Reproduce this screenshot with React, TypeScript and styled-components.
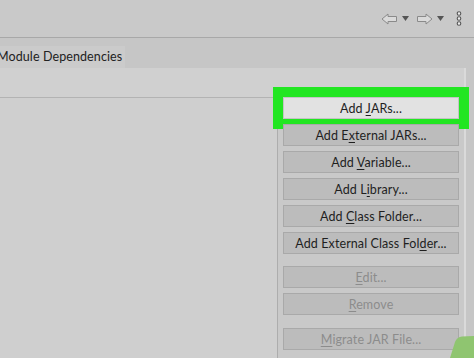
import React, { FC } from 'react'
import styled, { createGlobalStyle } from 'styled-components'

interface ButtonItem {
    before: string
    key: string
    after: string
    disabled?: boolean
    highlight?: boolean
    gapBefore?: number
}

const buttons: ButtonItem[] = [
    { before: 'Add ', key: 'J', after: 'ARs...', highlight: true },
    { before: 'Add E', key: 'x', after: 'ternal JARs...' },
    { before: 'Add ', key: 'V', after: 'ariable...' },
    { before: 'Add L', key: 'i', after: 'brary...' },
    { before: 'Add ', key: 'C', after: 'lass Folder...' },
    { before: 'Add External Class Fol', key: 'd', after: 'er...' },
    { before: '', key: 'E', after: 'dit...', disabled: true, gapBefore: 7 },
    { before: '', key: 'R', after: 'emove', disabled: true },
    { before: '', key: 'M', after: 'igrate JAR File...', disabled: true, gapBefore: 8 },
]

const GlobalStyle = createGlobalStyle`
    html, body {
        margin: 0;
        padding: 0;
        background: #c6c6c6;
    }
    body {
        font-family: Lato, "Open Sans", sans-serif;
    }
`

const BackArrow: FC = () => (
    <svg width="17" height="12" viewBox="0 0 17 12">
        <path d="M1 6 L7 1 L7 3.5 L15.5 3.5 L15.5 8.5 L7 8.5 L7 11 Z" fill="#dadada" stroke="#8a8a8a" strokeWidth="1" strokeLinejoin="round" />
    </svg>
)

const ForwardArrow: FC = () => (
    <svg width="17" height="12" viewBox="0 0 17 12">
        <path d="M16 6 L10 1 L10 3.5 L1.5 3.5 L1.5 8.5 L10 8.5 L10 11 Z" fill="#dadada" stroke="#8a8a8a" strokeWidth="1" strokeLinejoin="round" />
    </svg>
)

const DropTriangle: FC = () => (
    <svg width="7" height="5" viewBox="0 0 7 5">
        <path d="M0 0 L7 0 L3.5 5 Z" fill="#555" />
    </svg>
)

const MenuDots: FC = () => (
    <svg width="6" height="15" viewBox="0 0 6 15">
        <circle cx="3" cy="2.5" r="1.8" fill="#eee" stroke="#555" strokeWidth="1.1" />
        <circle cx="3" cy="7.5" r="1.8" fill="#eee" stroke="#555" strokeWidth="1.1" />
        <circle cx="3" cy="12.5" r="1.8" fill="#eee" stroke="#555" strokeWidth="1.1" />
    </svg>
)

const App: FC = () => {
  return (
    <>
    <GlobalStyle />
    <Page>
        <TopBar>
            <NavGroup>
                <BackArrow />
                <DropTriangle />
            </NavGroup>
            <NavGroup>
                <ForwardArrow />
                <DropTriangle />
            </NavGroup>
            <DotsWrap><MenuDots /></DotsWrap>
        </TopBar>
        <TabRow>
            <Tab>Module Dependencies</Tab>
        </TabRow>
        <Panel>
            <HeaderStrip />
            <PanelBody>
                <ListArea />
                <ButtonColumn>
                    {buttons.map((b) => (
                        <ActionButton
                            key={b.before + b.key + b.after}
                            $disabled={b.disabled}
                            $highlight={b.highlight}
                            $gap={b.gapBefore}
                        >
                            <span>{b.before}<Mnemonic>{b.key}</Mnemonic>{b.after}</span>
                        </ActionButton>
                    ))}
                </ButtonColumn>
            </PanelBody>
        </Panel>
        <CornerBlob>
            <svg width="24" height="23" viewBox="0 0 24 23">
                <defs>
                    <filter id="soft"><feGaussianBlur stdDeviation="0.6" /></filter>
                </defs>
                <path d="M0 23 L5 7 Q7 2 12 1.5 L24 1 L24 23 Z" fill="#8fc56f" filter="url(#soft)" />
            </svg>
        </CornerBlob>
    </Page>
    </>
  )
}

export default App

const Page = styled.div`
    position: relative;
    width: 474px;
    height: 358px;
    overflow: hidden;
    background: #c6c6c6;
    display: flex;
    flex-direction: column;
`

const TopBar = styled.div`
    height: 38px;
    flex-shrink: 0;
    background: #c9c9c9;
    border-bottom: 1px solid #a8a8a8;
    display: flex;
    align-items: center;
    justify-content: flex-end;
    gap: 7px;
    padding-right: 12px;
    box-sizing: border-box;
`

const NavGroup = styled.div`
    display: flex;
    align-items: center;
    gap: 4px;
`

const DotsWrap = styled.div`
    display: flex;
    margin-left: 5px;
`

const TabRow = styled.div`
    display: flex;
    padding-top: 8px;
    flex-shrink: 0;
`

const Tab = styled.div`
    height: 22px;
    line-height: 22px;
    padding: 0 3px 0 0;
    margin-left: -3px;
    background: #cbcbcb;
    font-size: 12.5px;
    letter-spacing: 0.1px;
    color: #222;
`

const Panel = styled.div`
    flex: 1;
    display: flex;
    flex-direction: column;
    width: 466px;
    box-sizing: border-box;
    border-right: 2px solid #dadada;
`

const HeaderStrip = styled.div`
    height: 29px;
    flex-shrink: 0;
    background: #d0d0d0;
    border-bottom: 1px solid #b3b3b3;
`

const PanelBody = styled.div`
    flex: 1;
    display: flex;
`

const ListArea = styled.div`
    width: 277px;
    background: #cfcfcf;
    border-right: 1px solid #adadad;
`

const ButtonColumn = styled.div`
    flex: 1;
    display: flex;
    flex-direction: column;
    gap: 5px;
    padding: 0 5px 0 5px;
    margin-top: -1px;
    background: #c9c9c9;
`

const ActionButton = styled.div<{ $disabled?: boolean; $highlight?: boolean; $gap?: number }>`
    height: 22px;
    box-sizing: border-box;
    width: 176px;
    display: flex;
    align-items: center;
    justify-content: center;
    font-size: 12.5px;
    letter-spacing: 0.1px;
    color: ${(p) => (p.$disabled ? '#8c8c8c' : '#1f1f1f')};
    background: ${(p) => (p.$highlight ? '#e2e2e2' : '#bcbcbc')};
    border: 1px solid ${(p) => (p.$highlight ? '#c4c4c4' : '#a9a9a9')};
    outline: ${(p) => (p.$highlight ? '10px solid #22e622' : 'none')};
    margin-top: ${(p) => (p.$gap ? `${p.$gap}px` : '0')};
    white-space: nowrap;
`

const Mnemonic = styled.span`
    text-decoration: underline;
    text-underline-offset: 2px;
`

const CornerBlob = styled.div`
    position: absolute;
    right: 0;
    bottom: 0;
    width: 24px;
    height: 23px;
    display: flex;
`
